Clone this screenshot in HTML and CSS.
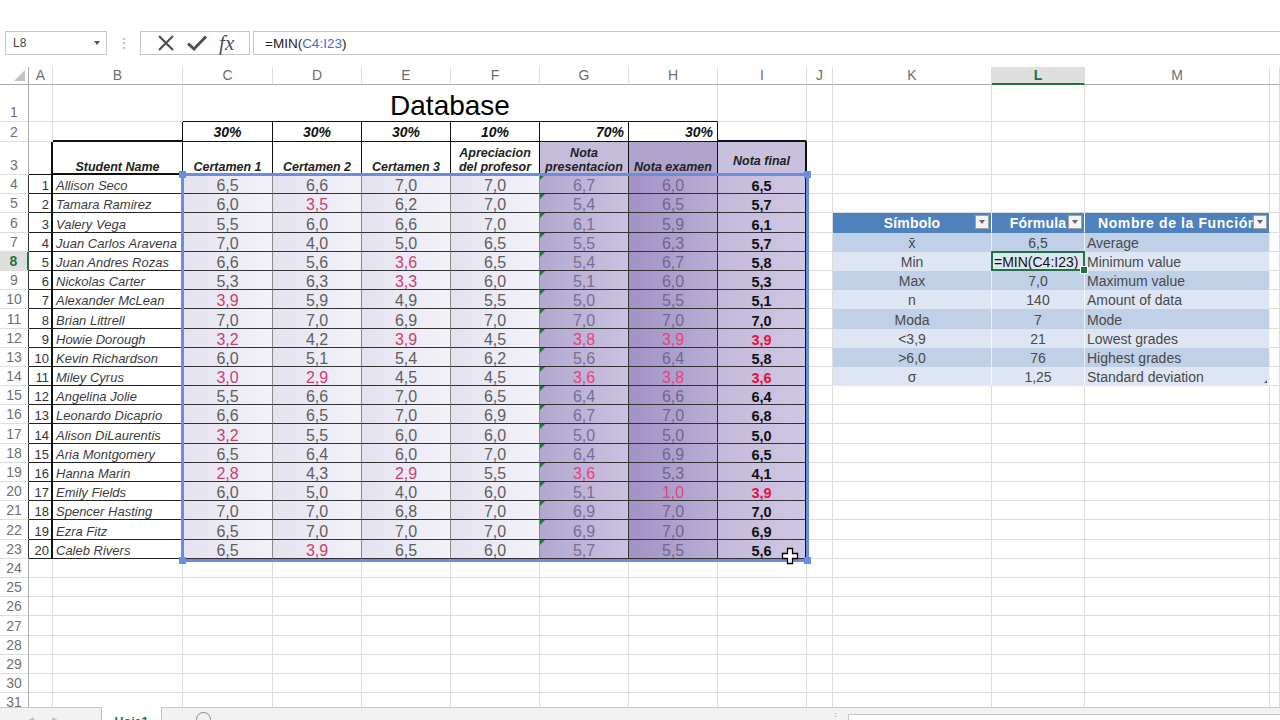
FILE: index.html
```html
<!DOCTYPE html>
<html lang="es">
<head>
<meta charset="utf-8">
<title>Database</title>
<link rel="stylesheet" href="styles.css">
</head>
<body>
<div class="top">
  <div class="namebox"><span>L8</span><i class="caret"></i></div>
  <div class="vdots">⋮</div>
  <div class="fxgroup">
    <svg class="ic" width="20" height="20" viewBox="0 0 20 20"><path d="M3 3 L17 17 M17 3 L3 17" stroke="#505050" stroke-width="2.2" fill="none"/></svg>
    <svg class="ic" width="22" height="20" viewBox="0 0 22 20"><path d="M2 10.5 L8 16 L20 3.5" stroke="#505050" stroke-width="3" fill="none"/></svg>
    <span class="fx">fx</span>
  </div>
  <div class="finput">=MIN(<span class="ref">C4:I23</span>)</div>
</div>

<div class="wrap">
<div class="sheet">
  <div class="corner"></div><div class="ch">A</div><div class="ch">B</div><div class="ch">C</div><div class="ch">D</div><div class="ch">E</div><div class="ch">F</div><div class="ch">G</div><div class="ch">H</div><div class="ch">I</div><div class="ch">J</div><div class="ch">K</div><div class="ch on">L</div><div class="ch">M</div><div class="ch"></div>

  <div class="rh">1</div><span></span><span></span><div class="db">Database</div><span></span><span></span><span></span><span></span><span></span><span></span>

  <div class="rh">2</div><span></span><span class="b2"></span><div class="pct">30%</div><div class="pct">30%</div><div class="pct">30%</div><div class="pct">10%</div><div class="pct pr">70%</div><div class="pct pr">30%</div><span class="i2"></span><span></span><span></span><span></span><span></span><span></span>

  <div class="rh">3</div><span class="a3"></span><div class="sn">Student Name</div><div class="hd"><span>Certamen 1</span></div><div class="hd"><span>Certamen 2</span></div><div class="hd"><span>Certamen 3</span></div><div class="hd"><span>Apreciacion<br>del profesor</span></div><div class="hd np"><span>Nota<br>presentacion</span></div><div class="hd ne"><span>Nota examen</span></div><div class="hd nf"><span>Nota final</span></div><span></span><span></span><span></span><span></span><span></span>

  <div class="rh bk">4</div><div class="no">1</div><div class="nm">Allison Seco</div><div class="v">6,5</div><div class="v">6,6</div><div class="v">7,0</div><div class="v">7,0</div><div class="g">6,7</div><div class="h">6,0</div><div class="f">6,5</div><span></span><span></span><span></span><span></span><span></span>

  <div class="rh bk">5</div><div class="no">2</div><div class="nm">Tamara Ramirez</div><div class="v">6,0</div><div class="v rd">3,5</div><div class="v">6,2</div><div class="v">7,0</div><div class="g">5,4</div><div class="h">6,5</div><div class="f">5,7</div><span></span><span></span><span></span><span></span><span></span>

  <div class="rh bk">6</div><div class="no">3</div><div class="nm">Valery Vega</div><div class="v">5,5</div><div class="v">6,0</div><div class="v">6,6</div><div class="v">7,0</div><div class="g">6,1</div><div class="h">5,9</div><div class="f">6,1</div><span></span><div class="th">Símbolo<i class="dd"></i></div><div class="th">Fórmula<i class="dd"></i></div><div class="th thm">Nombre de la Función<i class="dd"></i></div><span></span>

  <div class="rh bk">7</div><div class="no">4</div><div class="nm">Juan Carlos Aravena</div><div class="v">7,0</div><div class="v">4,0</div><div class="v">5,0</div><div class="v">6,5</div><div class="g">5,5</div><div class="h">6,3</div><div class="f">5,7</div><span></span><div class="tk t1">x̄</div><div class="tk t1">6,5</div><div class="tm t1">Average</div><span></span>

  <div class="rh bk on">8</div><div class="no">5</div><div class="nm">Juan Andres Rozas</div><div class="v">6,6</div><div class="v">5,6</div><div class="v rd">3,6</div><div class="v">6,5</div><div class="g">5,4</div><div class="h">6,7</div><div class="f">5,8</div><span></span><div class="tk t2">Min</div><div class="tk t2 act">=MIN(C4:I23)</div><div class="tm t2">Minimum value</div><span></span>

  <div class="rh bk">9</div><div class="no">6</div><div class="nm">Nickolas Carter</div><div class="v">5,3</div><div class="v">6,3</div><div class="v rd">3,3</div><div class="v">6,0</div><div class="g">5,1</div><div class="h">6,0</div><div class="f">5,3</div><span></span><div class="tk t1">Max</div><div class="tk t1">7,0</div><div class="tm t1">Maximum value</div><span></span>

  <div class="rh bk">10</div><div class="no">7</div><div class="nm">Alexander McLean</div><div class="v rd">3,9</div><div class="v">5,9</div><div class="v">4,9</div><div class="v">5,5</div><div class="g">5,0</div><div class="h">5,5</div><div class="f">5,1</div><span></span><div class="tk t2">n</div><div class="tk t2">140</div><div class="tm t2">Amount of data</div><span></span>

  <div class="rh bk">11</div><div class="no">8</div><div class="nm">Brian Littrell</div><div class="v">7,0</div><div class="v">7,0</div><div class="v">6,9</div><div class="v">7,0</div><div class="g">7,0</div><div class="h">7,0</div><div class="f">7,0</div><span></span><div class="tk t1">Moda</div><div class="tk t1">7</div><div class="tm t1">Mode</div><span></span>

  <div class="rh bk">12</div><div class="no">9</div><div class="nm">Howie Dorough</div><div class="v rd">3,2</div><div class="v">4,2</div><div class="v rd">3,9</div><div class="v">4,5</div><div class="g rd">3,8</div><div class="h rd">3,9</div><div class="f rd">3,9</div><span></span><div class="tk t2">&lt;3,9</div><div class="tk t2">21</div><div class="tm t2">Lowest grades</div><span></span>

  <div class="rh bk">13</div><div class="no">10</div><div class="nm">Kevin Richardson</div><div class="v">6,0</div><div class="v">5,1</div><div class="v">5,4</div><div class="v">6,2</div><div class="g">5,6</div><div class="h">6,4</div><div class="f">5,8</div><span></span><div class="tk t1">&gt;6,0</div><div class="tk t1">76</div><div class="tm t1">Highest grades</div><span></span>

  <div class="rh bk">14</div><div class="no">11</div><div class="nm">Miley Cyrus</div><div class="v rd">3,0</div><div class="v rd">2,9</div><div class="v">4,5</div><div class="v">4,5</div><div class="g rd">3,6</div><div class="h rd">3,8</div><div class="f rd">3,6</div><span></span><div class="tk t2">σ</div><div class="tk t2">1,25</div><div class="tm t2 last">Standard deviation</div><span></span>

  <div class="rh bk">15</div><div class="no">12</div><div class="nm">Angelina Jolie</div><div class="v">5,5</div><div class="v">6,6</div><div class="v">7,0</div><div class="v">6,5</div><div class="g">6,4</div><div class="h">6,6</div><div class="f">6,4</div><span></span><span></span><span></span><span></span><span></span>

  <div class="rh bk">16</div><div class="no">13</div><div class="nm">Leonardo Dicaprio</div><div class="v">6,6</div><div class="v">6,5</div><div class="v">7,0</div><div class="v">6,9</div><div class="g">6,7</div><div class="h">7,0</div><div class="f">6,8</div><span></span><span></span><span></span><span></span><span></span>

  <div class="rh bk">17</div><div class="no">14</div><div class="nm">Alison DiLaurentis</div><div class="v rd">3,2</div><div class="v">5,5</div><div class="v">6,0</div><div class="v">6,0</div><div class="g">5,0</div><div class="h">5,0</div><div class="f">5,0</div><span></span><span></span><span></span><span></span><span></span>

  <div class="rh bk">18</div><div class="no">15</div><div class="nm">Aria Montgomery</div><div class="v">6,5</div><div class="v">6,4</div><div class="v">6,0</div><div class="v">7,0</div><div class="g">6,4</div><div class="h">6,9</div><div class="f">6,5</div><span></span><span></span><span></span><span></span><span></span>

  <div class="rh bk">19</div><div class="no">16</div><div class="nm">Hanna Marin</div><div class="v rd">2,8</div><div class="v">4,3</div><div class="v rd">2,9</div><div class="v">5,5</div><div class="g rd">3,6</div><div class="h">5,3</div><div class="f">4,1</div><span></span><span></span><span></span><span></span><span></span>

  <div class="rh bk">20</div><div class="no">17</div><div class="nm">Emily Fields</div><div class="v">6,0</div><div class="v">5,0</div><div class="v">4,0</div><div class="v">6,0</div><div class="g">5,1</div><div class="h rd">1,0</div><div class="f rd">3,9</div><span></span><span></span><span></span><span></span><span></span>

  <div class="rh bk">21</div><div class="no">18</div><div class="nm">Spencer Hasting</div><div class="v">7,0</div><div class="v">7,0</div><div class="v">6,8</div><div class="v">7,0</div><div class="g">6,9</div><div class="h">7,0</div><div class="f">7,0</div><span></span><span></span><span></span><span></span><span></span>

  <div class="rh bk">22</div><div class="no">19</div><div class="nm">Ezra Fitz</div><div class="v">6,5</div><div class="v">7,0</div><div class="v">7,0</div><div class="v">7,0</div><div class="g">6,9</div><div class="h">7,0</div><div class="f">6,9</div><span></span><span></span><span></span><span></span><span></span>

  <div class="rh bk">23</div><div class="no">20</div><div class="nm">Caleb Rivers</div><div class="v">6,5</div><div class="v rd">3,9</div><div class="v">6,5</div><div class="v">6,0</div><div class="g">5,7</div><div class="h">5,5</div><div class="f">5,6</div><span></span><span></span><span></span><span></span><span></span>

  <div class="rh">24</div><span></span><span></span><span></span><span></span><span></span><span></span><span></span><span></span><span></span><span></span><span></span><span></span><span></span><span></span>
  <div class="rh">25</div><span></span><span></span><span></span><span></span><span></span><span></span><span></span><span></span><span></span><span></span><span></span><span></span><span></span><span></span>
  <div class="rh">26</div><span></span><span></span><span></span><span></span><span></span><span></span><span></span><span></span><span></span><span></span><span></span><span></span><span></span><span></span>
  <div class="rh">27</div><span></span><span></span><span></span><span></span><span></span><span></span><span></span><span></span><span></span><span></span><span></span><span></span><span></span><span></span>
  <div class="rh">28</div><span></span><span></span><span></span><span></span><span></span><span></span><span></span><span></span><span></span><span></span><span></span><span></span><span></span><span></span>
  <div class="rh">29</div><span></span><span></span><span></span><span></span><span></span><span></span><span></span><span></span><span></span><span></span><span></span><span></span><span></span><span></span>
  <div class="rh">30</div><span></span><span></span><span></span><span></span><span></span><span></span><span></span><span></span><span></span><span></span><span></span><span></span><span></span><span></span>
  <div class="rh r31">31</div><span></span><span></span><span></span><span></span><span></span><span></span><span></span><span></span><span></span><span></span><span></span><span></span><span></span><span></span>
</div>
<div class="sel"><i class="hnd tl"></i><i class="hnd tr"></i><i class="hnd bl"></i><i class="hnd br"></i></div>
<svg class="cursor" width="18" height="18" viewBox="0 0 18 18"><path d="M6.5 1.5 H11.5 V6.5 H16.5 V11.5 H11.5 V16.5 H6.5 V11.5 H1.5 V6.5 H6.5 Z" fill="#fff" stroke="#000" stroke-width="1.3"/></svg>
</div>

<div class="tabs">
  <div class="nav"><span>◀</span><span>▶</span></div>
  <div class="tab">Hoja1</div>
  <div class="add"></div>
  <div class="spacer"></div>
  <div class="tdots">⋮</div>
  <div class="hscroll"></div>
</div>
</body>
</html>
```

FILE: styles.css
```css
* { box-sizing: border-box; margin: 0; padding: 0; }
html, body { width: 1280px; height: 720px; overflow: hidden; background: #fff; }
body { font-family: "Liberation Sans", Arial, sans-serif; display: flex; flex-direction: column; color: #333; }

/* formula bar */
.top { height: 67px; flex: none; display: flex; align-items: flex-start; padding: 31px 0 0 5px; }
.namebox { width: 102px; height: 24px; border: 1px solid #c6c6c6; display: flex; align-items: center; justify-content: space-between; padding: 0 6px 0 7px; font-size: 12px; color: #444; }
.caret { width: 0; height: 0; border-left: 3.5px solid transparent; border-right: 3.5px solid transparent; border-top: 4px solid #555; }
.vdots { width: 33px; height: 24px; display: flex; align-items: center; justify-content: center; color: #b0b0b0; font-size: 14px; }
.fxgroup { width: 110px; height: 24px; border: 1px solid #c6c6c6; display: flex; align-items: center; justify-content: space-evenly; padding: 0 4px; }
.fx { font-family: "Liberation Serif", "Times New Roman", serif; font-style: italic; font-size: 21px; color: #505050; line-height: 20px; }
.finput { flex: 1; margin-left: 3px; height: 24px; border: 1px solid #c6c6c6; border-right: none; padding-left: 11px; font-size: 13.5px; color: #222; display: flex; align-items: center; }
.ref { color: #3d6fc8; }

/* sheet */
.wrap { position: relative; flex: none; height: 640px; overflow: hidden; }
.sheet {
  display: grid;
  grid-template-columns: 29px 24px 130px 90px 89px 89px 89px 89px 89px 89px 26px 159px 93px 185px 10px;
  grid-template-rows: 18px 37px 20px 33px;
  grid-auto-rows: 19.2px;
  font-size: 13px;
}
.sheet > * { border-right: 1px solid #dcdcdc; border-bottom: 1px solid #dcdcdc; display: flex; align-items: flex-end; overflow: hidden; white-space: nowrap; min-width: 0; line-height: 17px; }

.corner { border-right-color: #ababab; border-bottom-color: #ababab; position: relative; }
.corner::after { content: ""; position: absolute; right: 3px; bottom: 3px; width: 0; height: 0; border-left: 11px solid transparent; border-bottom: 11px solid #c4c4c4; }
.ch { justify-content: center; align-items: center; color: #6d6d6d; font-size: 14px; border-bottom-color: #ababab; }
.ch.on { background: #dfdfdf; border-bottom: 2px solid #217346; color: #217346; font-weight: bold; }
.rh { justify-content: center; color: #707070; font-size: 14px; border-right-color: #ababab; }
.rh.bk { border-right-color: #333; }
.rh.on { background: #dfdfdf; color: #217346; font-weight: bold; border-right: 2px solid #217346; }
.rh.r31 { align-items: flex-start; line-height: 14px; padding-top: 2px; }

.db { grid-column: span 6; justify-content: center; font-size: 28px; line-height: 30px; color: #000; border-bottom-color: #111; }
.pct { justify-content: center; align-items: center; font-weight: bold; font-style: italic; font-size: 14px; color: #111; border-right-color: #111; border-bottom-color: #111; padding-top: 2px; }
.pct.pr { justify-content: flex-end; padding-right: 4px; }
.b2 { border-bottom: 2px solid #111; border-right-color: #111; }
.i2 { border-bottom: 2px solid #111; }
.a3 { border-right: 2px solid #111; border-bottom-color: #111; }
.sn { justify-content: center; font-weight: bold; font-style: italic; font-size: 12.5px; line-height: 12px; color: #222; border-right-color: #111; border-bottom: 2px solid #111; }
.hd { justify-content: center; text-align: center; font-weight: bold; font-style: italic; font-size: 12.5px; line-height: 14px; color: #222; border-right-color: #111; border-bottom-color: #111; padding-bottom: 0; }
.np { background: #c5bbda; }
.ne { background: #b0a3cc; }
.nf { background: #c9c0de; align-items: center; border-right: 2px solid #111; padding-top: 5px; }

.no, .nm, .v, .g, .h, .f { line-height: 14px; }
.no { justify-content: flex-end; padding-right: 2px; color: #333; border-right: 2px solid #111; border-bottom-color: #222; }
.nm { font-style: italic; color: #3c3c3c; padding-left: 3px; border-right-color: #111; border-bottom-color: #222; }
.v, .g, .h, .f { justify-content: center; font-size: 16px; border-bottom-color: #333; }
.v { background: linear-gradient(to right, #e5e2f0, #f3f2f8); color: #606060; border-right-color: #8a8a8a; }
.g { background: linear-gradient(to right, #b3a7cf, #cbc2e0); color: #776f94; border-right-color: #333; position: relative; }
.g::before { content: ""; position: absolute; left: 0; top: 0; border-top: 5px solid #1f7a34; border-right: 5px solid transparent; }
.h { background: linear-gradient(to right, #a292c5, #b9add5); color: #6e6790; border-right-color: #333; }
.f { background: linear-gradient(to right, #c4b9da, #cfc7e3); color: #111; font-weight: bold; font-size: 14.5px; border-right: 2px solid #111; }
.v.rd { color: #cc3f6d; }
.g.rd, .h.rd { color: #e2457d; }
.f.rd { color: #e5123f; }

/* side table */
.th { background: #4f81bd; color: #fff; font-weight: bold; font-size: 14px; justify-content: center; align-items: center; padding-top: 3px; border-right-color: #fff; border-bottom-color: #4f81bd; position: relative; letter-spacing: 0.2px; }
.th.thm { justify-content: flex-start; padding-left: 13px; letter-spacing: 0.6px; }
.dd { position: absolute; right: 2px; top: 2px; width: 14px; height: 14px; background: #f3f3f3; border: 1px solid #a0a0a0; }
.dd::after { content: ""; position: absolute; left: 3px; top: 4px; border-left: 3px solid transparent; border-right: 3px solid transparent; border-top: 4px solid #666; }
.tk, .tm { font-size: 14px; line-height: 15px; color: #4a4a4a; border-right-color: rgba(255,255,255,0.7); border-bottom-color: transparent; }
.tk { justify-content: center; }
.tm { padding-left: 2px; }
.t1 { background: #bfd0e7; }
.t2 { background: #dde6f2; }
.act { overflow: visible; position: relative; z-index: 2; justify-content: flex-start; padding-left: 2px; color: #111; }
.act::after { content: ""; position: absolute; left: -1px; top: -1px; right: -1px; bottom: -1px; border: 2px solid #217346; }
.act::before { content: ""; position: absolute; right: -4px; bottom: -4px; width: 6px; height: 6px; background: #217346; border: 1px solid #fff; z-index: 3; }
.last { position: relative; }
.last::after { content: ""; position: absolute; right: 2px; bottom: 2px; border-left: 3px solid transparent; border-bottom: 3px solid #3b5f91; }

/* overlays */
.sel { position: absolute; left: 181px; top: 106px; width: 628px; height: 389px; border: 3px solid #6c8ddb; pointer-events: none; }
.hnd { position: absolute; width: 7px; height: 7px; background: #6c8ddb; }
.hnd.tl { left: -5px; top: -5px; }
.hnd.tr { right: -5px; top: -5px; }
.hnd.bl { left: -5px; bottom: -5px; }
.hnd.br { right: -5px; bottom: -5px; }
.cursor { position: absolute; left: 781px; top: 480px; }

/* sheet tabs */
.tabs { flex: none; height: 30px; display: flex; align-items: flex-start; background: #f2f2f2; border-top: 1px solid #c8c8c8; }
.nav { width: 101px; display: flex; gap: 18px; padding: 7px 0 0 27px; color: #c0c0c0; font-size: 9px; }
.tab { width: 61px; height: 30px; margin-top: -1px; background: #fff; border-left: 1px solid #c0c0c0; border-right: 1px solid #c0c0c0; color: #217346; font-weight: bold; font-size: 12.5px; text-align: center; padding-top: 8px; }
.add { width: 15px; height: 15px; border: 1.5px solid #8a8a8a; border-radius: 50%; margin: 4px 0 0 34px; }
.spacer { flex: 1; }
.tdots { width: 18px; color: #aaa; font-size: 11px; padding-top: 3px; }
.hscroll { width: 432px; height: 20px; margin-top: 6px; background: #fff; border: 1px solid #c6c6c6; border-right: none; }
```
